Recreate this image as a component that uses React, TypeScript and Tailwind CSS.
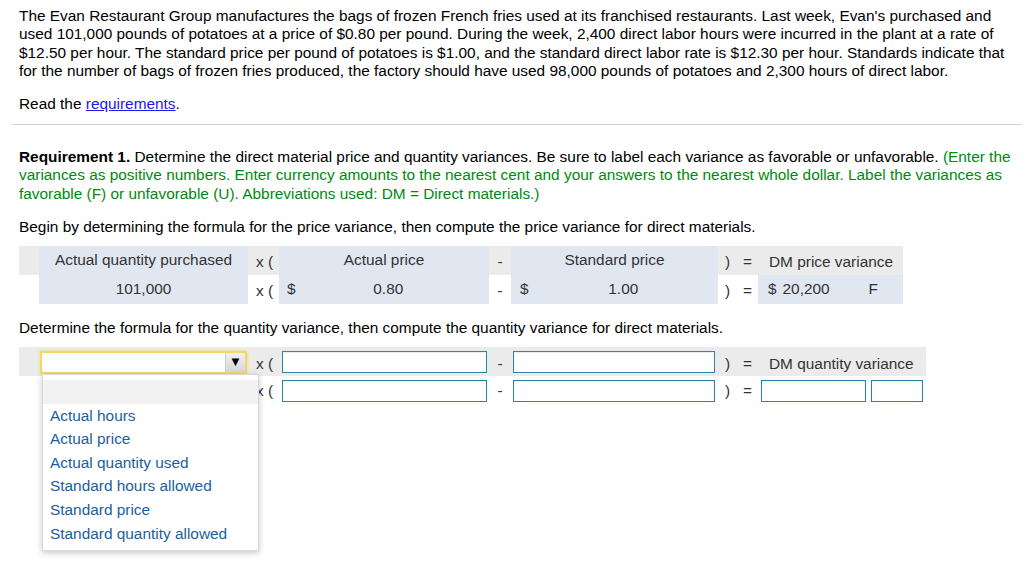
const font = { fontFamily: '"Liberation Sans", Arial, sans-serif' };

const options = [
  'Actual hours',
  'Actual price',
  'Actual quantity used',
  'Standard hours allowed',
  'Standard price',
  'Standard quantity allowed',
];

const Box: React.FC<{ w: string }> = ({ w }) => (
  <div className={`${w} h-[22px] border border-[#2b83a7] bg-white shadow-[inset_0_1px_1px_rgba(0,0,0,0.08)]`} />
);

const PriceTable: React.FC = () => {
  return (
    <div className="ml-[19px] w-[884px] text-[#333]">
      <div className="flex h-[29px] bg-[#ebebeb]">
        <div className="w-[20px]" />
        <div className="w-[209px] bg-[#e1e7f1] flex items-center justify-center">Actual quantity purchased</div>
        <div className="w-[31px] pl-[8px] flex items-end pb-[3px]">x (</div>
        <div className="w-[210px] bg-[#e1e7f1] flex items-center justify-center">Actual price</div>
        <div className="w-[22px] flex items-end justify-center pb-[3px]">-</div>
        <div className="w-[207px] bg-[#e1e7f1] flex items-center justify-center">Standard price</div>
        <div className="w-[19px] flex items-end justify-center pb-[3px]">)</div>
        <div className="w-[21px] flex items-end justify-center pb-[3px]">=</div>
        <div className="w-[145px] pl-[11px] flex items-end pb-[3px] whitespace-nowrap">DM price variance</div>
      </div>
      <div className="flex h-[29px]">
        <div className="w-[20px]" />
        <div className="w-[209px] bg-[#e1e7f1] flex items-center justify-center">101,000</div>
        <div className="w-[31px] pl-[8px] flex items-end pb-[3px]">x (</div>
        <div className="w-[210px] bg-[#e1e7f1] flex items-center">
          <span className="pl-[8px]">$</span>
          <span className="flex-1 text-center pr-[8px]">0.80</span>
        </div>
        <div className="w-[22px] flex items-end justify-center pb-[3px]">-</div>
        <div className="w-[207px] bg-[#e1e7f1] flex items-center">
          <span className="pl-[9px]">$</span>
          <span className="flex-1 text-center">1.00</span>
        </div>
        <div className="w-[19px] flex items-end justify-center pb-[3px]">)</div>
        <div className="w-[21px] flex items-end justify-center pb-[3px]">=</div>
        <div className="w-[145px] bg-[#e1e7f1] flex items-center pl-[10px]">
          <span>$</span>
          <span className="ml-[6px]">20,200</span>
          <span className="ml-auto pr-[25px]">F</span>
        </div>
      </div>
    </div>
  );
};

const QuantityTable: React.FC = () => {
  return (
    <div className="ml-[19px] w-[907px] text-[#333]">
      <div className="flex h-[29px] bg-[#ebebeb]">
        <div className="w-[20px]" />
        <div className="w-[209px] relative">
          <div className="ml-[1px] mt-[4px] w-[207px] h-[23px] bg-white border-2 border-[#f5d862] shadow-[0_0_3px_#f5d862] flex justify-end">
            <div className="w-[20px] h-full bg-gradient-to-b from-[#f0f0f0] to-[#d6d6d6] border-l border-[#cfcfcf] flex items-center justify-center text-[13px] text-black">
              ▼
            </div>
          </div>
          <div className="absolute left-[3px] top-[27px] w-[217px] h-[177px] z-10 bg-white border border-[#d8d8d8] shadow-[0_2px_6px_rgba(0,0,0,0.22)] pt-[5px]">
            <div className="h-[24px] bg-[#f2f2f2]" />
            {options.map((o) => (
              <div key={o} className="h-[23.6px] pl-[7px] flex items-center text-[#1c5ea0] whitespace-nowrap">
                {o}
              </div>
            ))}
          </div>
        </div>
        <div className="w-[31px] pl-[8px] flex items-end pb-[3px]">x (</div>
        <div className="w-[210px] flex items-center justify-center"><Box w="w-[205px]" /></div>
        <div className="w-[22px] flex items-end justify-center pb-[3px]">-</div>
        <div className="w-[207px] flex items-center justify-start pl-[2px]"><Box w="w-[202px]" /></div>
        <div className="w-[19px] flex items-end justify-center pb-[3px]">)</div>
        <div className="w-[21px] flex items-end justify-center pb-[3px]">=</div>
        <div className="w-[168px] pl-[11px] flex items-end pb-[3px] whitespace-nowrap">DM quantity variance</div>
      </div>
      <div className="flex h-[29px]">
        <div className="w-[20px]" />
        <div className="w-[209px]" />
        <div className="w-[31px] pl-[8px] flex items-center pt-[2px]">x (</div>
        <div className="w-[210px] flex items-center justify-center"><Box w="w-[205px]" /></div>
        <div className="w-[22px] flex items-center justify-center pt-[2px]">-</div>
        <div className="w-[207px] flex items-center justify-start pl-[2px]"><Box w="w-[202px]" /></div>
        <div className="w-[19px] flex items-center justify-center pt-[2px]">)</div>
        <div className="w-[21px] flex items-center justify-center pt-[2px]">=</div>
        <div className="w-[168px] flex items-center pl-[3px] gap-[5px]">
          <Box w="w-[105px]" />
          <Box w="w-[52px]" />
        </div>
      </div>
    </div>
  );
};

export default function App() {
  return (
    <div className="w-[1024px] h-[575px] bg-white text-black text-[15.4px] leading-[18.4px] overflow-hidden" style={font}>
      <div className="pl-[19px] pt-[7px]">
        <p>
          <span className="block whitespace-nowrap">The Evan Restaurant Group manufactures the bags of frozen French fries used at its franchised restaurants. Last week, Evan's purchased and</span>
          <span className="block whitespace-nowrap">used 101,000 pounds of potatoes at a price of $0.80 per pound. During the week, 2,400 direct labor hours were incurred in the plant at a rate of</span>
          <span className="block whitespace-nowrap">$12.50 per hour. The standard price per pound of potatoes is $1.00, and the standard direct labor rate is $12.30 per hour. Standards indicate that</span>
          <span className="block whitespace-nowrap">for the number of bags of frozen fries produced, the factory should have used 98,000 pounds of potatoes and 2,300 hours of direct labor.</span>
        </p>
        <p className="mt-[14px]">
          Read the <a className="text-[#1a1aee] underline">requirements</a>.
        </p>
      </div>
      <div className="ml-[12px] mr-[2px] mt-[11px] border-t border-[#cdd2dc]" />
      <div className="pl-[19px] mt-[23px]">
        <p>
          <span className="block whitespace-nowrap">
            <b>Requirement 1.</b> Determine the direct material price and quantity variances. Be sure to label each variance as favorable or unfavorable.{' '}
            <span className="text-[#008a0e]">(Enter the</span>
          </span>
          <span className="block whitespace-nowrap text-[#008a0e]">variances as positive numbers. Enter currency amounts to the nearest cent and your answers to the nearest whole dollar. Label the variances as</span>
          <span className="block whitespace-nowrap text-[#008a0e]">favorable (F) or unfavorable (U). Abbreviations used: DM = Direct materials.)</span>
        </p>
        <p className="mt-[15px]">Begin by determining the formula for the price variance, then compute the price variance for direct materials.</p>
      </div>
      <div className="mt-[9px]">
        <PriceTable />
      </div>
      <p className="pl-[19px] mt-[15px]">Determine the formula for the quantity variance, then compute the quantity variance for direct materials.</p>
      <div className="mt-[10px]">
        <QuantityTable />
      </div>
    </div>
  );
}
